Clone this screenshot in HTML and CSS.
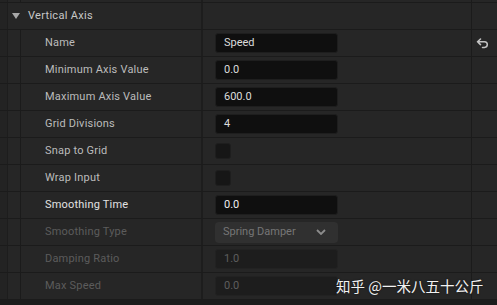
FILE: index.html
```html
<!DOCTYPE html>
<html lang="en">
<head>
    <meta charset="UTF-8">
    <title>Details - Vertical Axis</title>
    <link rel="stylesheet" href="styles.css">
</head>
<body>

<div class="panel">
    <div class="row row-top">
        <div class="gutter"></div>
        <div class="indent"></div>
        <div class="name"></div>
        <div class="value"></div>
        <div class="reset"></div>
    </div>

    <div class="row category">
        <div class="gutter"></div>
        <div class="cat-title">
            <span class="arrow"></span>
            Vertical Axis
        </div>
        <div class="value"></div>
        <div class="reset"></div>
    </div>

    <div class="row">
        <div class="gutter"></div>
        <div class="indent"></div>
        <div class="name">Name</div>
        <div class="value"><div class="field">Speed</div></div>
        <div class="reset">
            <svg width="13" height="11" viewBox="0 0 13 11">
                <path d="M4.5 1 L1.5 3.8 L4.5 6.6 M1.5 3.8 H8.5 A2.8 2.8 0 0 1 8.5 9.4 H6.5" fill="none" stroke="#c4c4c4" stroke-width="1.5" stroke-linejoin="round" stroke-linecap="round"/>
            </svg>
        </div>
    </div>

    <div class="row">
        <div class="gutter"></div>
        <div class="indent"></div>
        <div class="name">Minimum Axis Value</div>
        <div class="value"><div class="field">0.0</div></div>
        <div class="reset"></div>
    </div>

    <div class="row">
        <div class="gutter"></div>
        <div class="indent"></div>
        <div class="name">Maximum Axis Value</div>
        <div class="value"><div class="field">600.0</div></div>
        <div class="reset"></div>
    </div>

    <div class="row">
        <div class="gutter"></div>
        <div class="indent"></div>
        <div class="name">Grid Divisions</div>
        <div class="value"><div class="field">4</div></div>
        <div class="reset"></div>
    </div>

    <div class="row">
        <div class="gutter"></div>
        <div class="indent"></div>
        <div class="name">Snap to Grid</div>
        <div class="value"><div class="check"></div></div>
        <div class="reset"></div>
    </div>

    <div class="row">
        <div class="gutter"></div>
        <div class="indent"></div>
        <div class="name">Wrap Input</div>
        <div class="value"><div class="check"></div></div>
        <div class="reset"></div>
    </div>

    <div class="row hover">
        <div class="gutter"></div>
        <div class="indent"></div>
        <div class="name">Smoothing Time</div>
        <div class="value"><div class="field">0.0</div></div>
        <div class="reset"></div>
    </div>

    <div class="row disabled">
        <div class="gutter"></div>
        <div class="indent"></div>
        <div class="name">Smoothing Type</div>
        <div class="value">
            <div class="combo">
                Spring Damper
                <svg width="10" height="6" viewBox="0 0 10 6">
                    <path d="M1 1 L5 5 L9 1" fill="none" stroke="#8c8c8c" stroke-width="1.8"/>
                </svg>
            </div>
        </div>
        <div class="reset"></div>
    </div>

    <div class="row disabled">
        <div class="gutter"></div>
        <div class="indent"></div>
        <div class="name">Damping Ratio</div>
        <div class="value"><div class="field">1.0</div></div>
        <div class="reset"></div>
    </div>

    <div class="row disabled">
        <div class="gutter"></div>
        <div class="indent"></div>
        <div class="name">Max Speed</div>
        <div class="value"><div class="field">0.0</div></div>
        <div class="reset"></div>
    </div>
</div>

<div class="watermark">知乎 @一米八五十公斤</div>

</body>
</html>
```

FILE: styles.css
```css
body {
    margin: 0;
    padding: 0;
    background-color: #1c1c1c;
    font-family: Roboto, "Noto Sans", sans-serif;
    font-size: 11px;
    color: #bcbcbc;
    width: 497px;
    height: 305px;
    overflow: hidden;
    position: relative;
}

.panel {
    display: flex;
    flex-direction: column;
}

.row {
    display: flex;
    height: 26px;
    border-bottom: 1px solid #1b1b1b;
    background-color: #262626;
    line-height: 12px;
}

.row-top {
    height: 2px;
}

.gutter {
    width: 7px;
    border-right: 1px solid #1d1d1d;
    background-color: #232323;
}

.indent {
    width: 12px;
    border-right: 1px solid #1b1b1b;
}

.name {
    width: 156px;
    padding: 0 0 1px 24px;
    border-right: 2px solid #1d1d1d;
    display: flex;
    align-items: center;
    letter-spacing: 0.2px;
}

.value {
    width: 256px;
    padding-left: 12px;
    border-right: 1px solid #1b1b1b;
    display: flex;
    align-items: center;
}

.reset {
    flex: 1;
    display: flex;
    align-items: center;
    padding-left: 4px;
}

.category .cat-title {
    width: 189px;
    padding: 0 0 1px 4px;
    border-right: 2px solid #1d1d1d;
    display: flex;
    align-items: center;
    gap: 8px;
    color: #c8c8c8;
    letter-spacing: 0.3px;
}

.arrow {
    width: 0;
    height: 0;
    border-left: 4.5px solid transparent;
    border-right: 4.5px solid transparent;
    border-top: 6px solid #a8a8a8;
    margin-top: 1px;
}

.field {
    box-sizing: border-box;
    width: 123px;
    height: 20px;
    padding: 0 0 1px 8px;
    background-color: #0f0f0f;
    border: 1px solid #1e1e1e;
    border-radius: 3px;
    display: flex;
    align-items: center;
    color: #dcdcdc;
}

.check {
    width: 16px;
    height: 16px;
    background-color: #161616;
    border: 1px solid #1e1e1e;
    box-sizing: border-box;
    border-radius: 3px;
}

.row.hover .name {
    color: #e2e2e2;
}

.row.hover .field {
    color: #f0f0f0;
}

.row.disabled .name {
    color: #5c5c5c;
}

.row.disabled .field {
    background-color: #1d1d1d;
    border-color: #222222;
    color: #5e5e5e;
}

.combo {
    box-sizing: border-box;
    width: 123px;
    height: 21px;
    padding: 0 12px 1px 8px;
    background-color: #303030;
    border-radius: 4px;
    display: flex;
    align-items: center;
    justify-content: space-between;
    color: #767676;
}

.watermark {
    position: absolute;
    left: 336px;
    top: 276px;
    font-family: "Noto Sans CJK SC", sans-serif;
    font-size: 14.5px;
    line-height: 20px;
    color: #f2f2f2;
    text-shadow: 0 0 2px rgba(0, 0, 0, 0.6);
    white-space: nowrap;
}
```
